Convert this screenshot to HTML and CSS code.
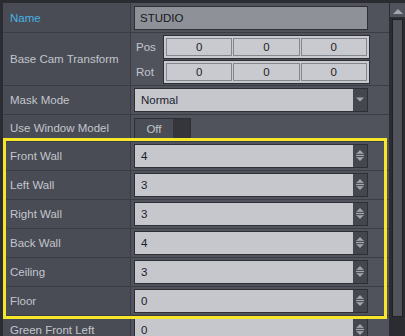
FILE: index.html
```html
<!DOCTYPE html>
<html>
<head>
<meta charset="utf-8">
<link rel="stylesheet" href="styles.css">
</head>
<body>
<div class="panel">
  <div class="props">
    <div class="row h29">
      <div class="label name">Name</div>
      <div class="value"><div class="text-field">STUDIO</div></div>
    </div>
    <div class="row h52">
      <div class="label">Base Cam Transform</div>
      <div class="value vec-cell">
        <div class="vec-row">
          <span class="vec-label">Pos</span>
          <div class="vec-group"><div class="vec-box">0</div><div class="vec-box">0</div><div class="vec-box">0</div></div>
        </div>
        <div class="vec-row">
          <span class="vec-label">Rot</span>
          <div class="vec-group"><div class="vec-box">0</div><div class="vec-box">0</div><div class="vec-box">0</div></div>
        </div>
      </div>
    </div>
    <div class="row h28">
      <div class="label">Mask Mode</div>
      <div class="value">
        <div class="combo">
          <span class="combo-text">Normal</span>
          <span class="combo-btn"><svg width="14" height="22" viewBox="0 0 14 22"><polygon points="3,8.5 11,8.5 7,12.5" fill="#a3a5ab"/></svg></span>
        </div>
      </div>
    </div>
    <div class="row h26">
      <div class="label">Use Window Model</div>
      <div class="value"><div class="toggle"><span class="toggle-off">Off</span><span class="toggle-knob"></span></div></div>
    </div>
    <div class="row h28">
      <div class="label">Front Wall</div>
      <div class="value"><div class="spin"><span class="spin-text">4</span><span class="spin-btn"><svg width="14" height="22" viewBox="0 0 14 22"><polygon points="3,9 7,5 11,9" fill="#a3a5ab" stroke="#6d6f76" stroke-width="0.6"/><line x1="3" y1="10.5" x2="11" y2="10.5" stroke="#a3a5ab" stroke-width="1"/><polygon points="3,12 11,12 7,16" fill="#a3a5ab" stroke="#6d6f76" stroke-width="0.6"/></svg></span></div></div>
    </div>
    <div class="row h28">
      <div class="label">Left Wall</div>
      <div class="value"><div class="spin"><span class="spin-text">3</span><span class="spin-btn"><svg width="14" height="22" viewBox="0 0 14 22"><polygon points="3,9 7,5 11,9" fill="#a3a5ab" stroke="#6d6f76" stroke-width="0.6"/><line x1="3" y1="10.5" x2="11" y2="10.5" stroke="#a3a5ab" stroke-width="1"/><polygon points="3,12 11,12 7,16" fill="#a3a5ab" stroke="#6d6f76" stroke-width="0.6"/></svg></span></div></div>
    </div>
    <div class="row h28">
      <div class="label">Right Wall</div>
      <div class="value"><div class="spin"><span class="spin-text">3</span><span class="spin-btn"><svg width="14" height="22" viewBox="0 0 14 22"><polygon points="3,9 7,5 11,9" fill="#a3a5ab" stroke="#6d6f76" stroke-width="0.6"/><line x1="3" y1="10.5" x2="11" y2="10.5" stroke="#a3a5ab" stroke-width="1"/><polygon points="3,12 11,12 7,16" fill="#a3a5ab" stroke="#6d6f76" stroke-width="0.6"/></svg></span></div></div>
    </div>
    <div class="row h28">
      <div class="label">Back Wall</div>
      <div class="value"><div class="spin"><span class="spin-text">4</span><span class="spin-btn"><svg width="14" height="22" viewBox="0 0 14 22"><polygon points="3,9 7,5 11,9" fill="#a3a5ab" stroke="#6d6f76" stroke-width="0.6"/><line x1="3" y1="10.5" x2="11" y2="10.5" stroke="#a3a5ab" stroke-width="1"/><polygon points="3,12 11,12 7,16" fill="#a3a5ab" stroke="#6d6f76" stroke-width="0.6"/></svg></span></div></div>
    </div>
    <div class="row h28">
      <div class="label">Ceiling</div>
      <div class="value"><div class="spin"><span class="spin-text">3</span><span class="spin-btn"><svg width="14" height="22" viewBox="0 0 14 22"><polygon points="3,9 7,5 11,9" fill="#a3a5ab" stroke="#6d6f76" stroke-width="0.6"/><line x1="3" y1="10.5" x2="11" y2="10.5" stroke="#a3a5ab" stroke-width="1"/><polygon points="3,12 11,12 7,16" fill="#a3a5ab" stroke="#6d6f76" stroke-width="0.6"/></svg></span></div></div>
    </div>
    <div class="row h28">
      <div class="label">Floor</div>
      <div class="value"><div class="spin"><span class="spin-text">0</span><span class="spin-btn"><svg width="14" height="22" viewBox="0 0 14 22"><polygon points="3,9 7,5 11,9" fill="#a3a5ab" stroke="#6d6f76" stroke-width="0.6"/><line x1="3" y1="10.5" x2="11" y2="10.5" stroke="#a3a5ab" stroke-width="1"/><polygon points="3,12 11,12 7,16" fill="#a3a5ab" stroke="#6d6f76" stroke-width="0.6"/></svg></span></div></div>
    </div>
    <div class="row h28 last">
      <div class="label">Green Front Left</div>
      <div class="value"><div class="spin"><span class="spin-text">0</span><span class="spin-btn"><svg width="14" height="22" viewBox="0 0 14 22"><polygon points="3,9 7,5 11,9" fill="#a3a5ab" stroke="#6d6f76" stroke-width="0.6"/><line x1="3" y1="10.5" x2="11" y2="10.5" stroke="#a3a5ab" stroke-width="1"/><polygon points="3,12 11,12 7,16" fill="#a3a5ab" stroke="#6d6f76" stroke-width="0.6"/></svg></span></div></div>
    </div>
  </div>
  <div class="scrollbar">
    <div class="scroll-up"><svg width="15" height="14" viewBox="0 0 15 14"><polygon points="3,11 8,6 13,11" fill="#a3a5ab"/></svg></div>
    <div class="scroll-thumb"></div>
  </div>
  <div class="highlight"></div>
</div>
</body>
</html>
```

FILE: styles.css
```css
html, body {
  margin: 0;
  padding: 0;
  background: #2b2c31;
  width: 405px;
  height: 336px;
  overflow: hidden;
}

.panel {
  position: relative;
  display: flex;
  padding: 3px 0 0 3px;
  height: 333px;
  font-family: "Liberation Sans", Arial, sans-serif;
  font-size: 11.5px;
}

.props {
  width: 386px;
  display: flex;
  flex-direction: column;
  background: #50535c;
}

.row {
  display: flex;
  border-bottom: 1px solid #3b3d44;
  flex-shrink: 0;
}

.h29 { height: 29px; }
.h52 { height: 52px; }
.h28 { height: 28px; }
.h26 { height: 26px; }

.label {
  width: 120px;
  padding-left: 7px;
  border-right: 1px solid #3a3c43;
  background: #494c55;
  color: #c3c5cc;
  display: flex;
  align-items: center;
  white-space: nowrap;
}

.label.name { color: #45b2e4; }

.value {
  width: 255px;
  padding-left: 3px;
  display: flex;
  align-items: center;
}

.text-field {
  width: 227px;
  height: 22px;
  border: 1px solid #2d2f34;
  background: #8f9199;
  color: #16171c;
  padding-left: 5px;
  display: flex;
  align-items: center;
}

.vec-cell {
  flex-direction: column;
  align-items: flex-start;
  justify-content: flex-start;
  padding-top: 2px;
  gap: 1px;
}

.vec-row {
  display: flex;
  align-items: center;
  height: 24px;
}

.vec-label {
  width: 27px;
  padding-left: 2px;
  color: #c3c5cc;
}

.vec-group {
  width: 201px;
  height: 18px;
  border: 1px solid #2d2f34;
  background: #c9cacf;
  padding: 2px;
  display: flex;
  gap: 1px;
}

.vec-box {
  flex: 1;
  border: 1px solid #85878e;
  display: flex;
  align-items: center;
  justify-content: center;
  color: #1c1d24;
}

.combo, .spin {
  width: 232px;
  height: 22px;
  border: 1px solid #2d2f34;
  background: #c6c7cc;
  display: flex;
  align-items: center;
}

.combo-text, .spin-text {
  flex: 1;
  padding-left: 6px;
  color: #1a1c2c;
}

.combo-btn, .spin-btn {
  width: 14px;
  height: 22px;
  background: #45474e;
  display: flex;
}

.toggle {
  width: 55px;
  height: 20px;
  border: 1px solid #2d2f34;
  display: flex;
  margin-top: 1px;
}

.toggle-off {
  width: 38px;
  background: #4a4d55;
  color: #c3c5cc;
  display: flex;
  align-items: center;
  justify-content: center;
}

.toggle-knob {
  flex: 1;
  background: #35363b;
}

.scrollbar {
  width: 15px;
  border-left: 1px solid #2b2c31;
  background: #2b2c31;
  display: flex;
  flex-direction: column;
  align-items: center;
}

.scroll-up {
  width: 15px;
  height: 14px;
  background: #50535b;
}

.scroll-thumb {
  width: 9px;
  height: 296px;
  margin-top: 2px;
  background: #50535b;
  border: 1px solid #1f2024;
}

.highlight {
  position: absolute;
  left: 3px;
  top: 138px;
  width: 378px;
  height: 175px;
  border: 3px solid #f7e72a;
  pointer-events: none;
}
```
